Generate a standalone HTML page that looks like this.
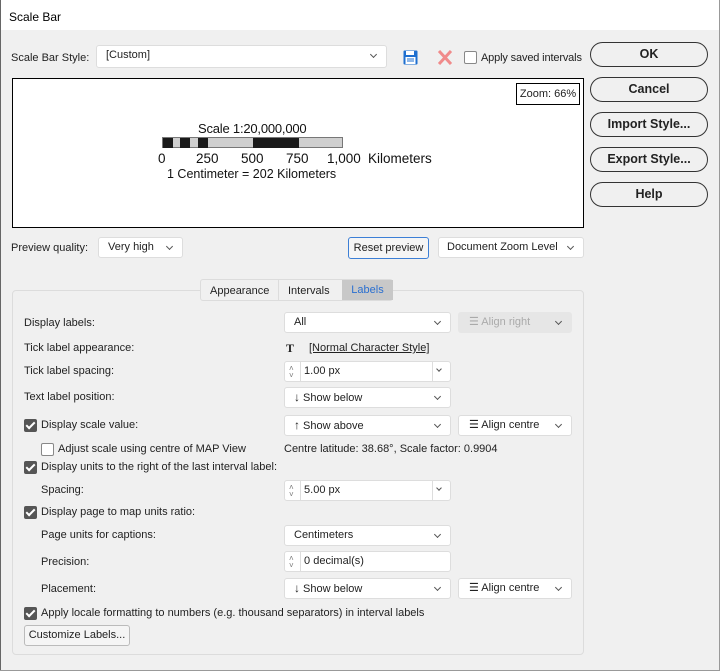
<!DOCTYPE html>
<html><head><meta charset="utf-8"><style>
*{box-sizing:border-box;margin:0;padding:0}
body{width:720px;height:671px;background:#f0f0f0;font-family:"Liberation Sans",sans-serif;font-size:11px;color:#222;position:relative;overflow:hidden}
.a{position:absolute;white-space:nowrap}
.title{left:0;top:0;width:720px;height:30px;background:#fff}
.cb{position:absolute;background:#fff;border:1px solid #ddd;border-radius:3px;height:21px;padding-left:9px;line-height:19px}
.cb:after{content:"";position:absolute;right:10px;top:6px;width:4px;height:4px;border-right:1px solid #555;border-bottom:1px solid #555;transform:rotate(45deg)}
.btn{position:absolute;left:590px;width:118px;height:25px;border:1px solid #333;border-radius:13px;background:#f0f0f0;text-align:center;line-height:23px;font-weight:bold;font-size:12.5px}
.chk{position:absolute;width:13px;height:13px;border-radius:2px;background:#555}
.chk:after{content:"";position:absolute;left:4px;top:1px;width:3px;height:7px;border-right:2px solid #fff;border-bottom:2px solid #fff;transform:rotate(45deg)}
.uchk{position:absolute;width:13px;height:13px;border:1px solid #888;border-radius:2px;background:#fff}
.spin{position:absolute;background:#fff;border:1px solid #ddd;border-radius:3px;height:21px;line-height:19px;padding-left:16px}
.spin:before{content:"";position:absolute;left:15px;top:0;bottom:0;border-left:1px solid #ddd}
.sp{position:absolute;left:4px;top:3px;font-size:8px;line-height:7px;color:#777}
.ar{font-weight:bold;font-size:12px}
</style></head><body>
<div class="a title"></div>
<div class="a" style="left:0;top:0;width:1px;height:671px;background:#666"></div>
<div class="a" style="left:719px;top:0;width:1px;height:671px;background:#999"></div>
<div class="a" style="left:0;top:670px;width:720px;height:1px;background:#999"></div>
<div class="a" style="left:9px;top:10px;font-size:12px;color:#000">Scale Bar</div>

<div class="a" style="left:11px;top:52px">Scale Bar Style:</div>
<div class="cb" style="left:96px;top:45px;width:291px;height:23px">[Custom]</div>
<svg class="a" style="left:403px;top:50px" width="15" height="15" viewBox="0 0 15 15"><rect x="0.5" y="0.5" width="14" height="14" rx="1" fill="#1e6fd0"/><rect x="3" y="1" width="8" height="4" fill="#fff"/><rect x="2.5" y="7" width="10" height="7" fill="#fff"/><path d="M4 9h7M4 11h7" stroke="#1e6fd0"/></svg>
<svg class="a" style="left:437px;top:50px" width="16" height="15" viewBox="0 0 16 15"><path d="M2 1L14 14M14 1L2 14" stroke="#f08a8a" stroke-width="3"/></svg>
<div class="uchk" style="left:464px;top:51px"></div>
<div class="a" style="left:481px;top:52px;letter-spacing:-0.15px">Apply saved intervals</div>

<div class="btn" style="top:42px">OK</div>
<div class="btn" style="top:77px">Cancel</div>
<div class="btn" style="top:112px">Import Style...</div>
<div class="btn" style="top:147px">Export Style...</div>
<div class="btn" style="top:182px">Help</div>

<div class="a" style="left:12px;top:78px;width:572px;height:150px;background:#fff;border:1px solid #000"></div>
<div class="a" style="left:516px;top:83px;width:64px;height:22px;border:1px solid #000;background:#fff;line-height:20px;text-align:center">Zoom: 66%</div>
<div class="a" style="left:198px;top:121px;font-size:13px;color:#111;letter-spacing:-0.2px">Scale 1:20,000,000</div>
<div class="a" style="left:162px;top:137px;width:181px;height:11px;background:#cfcfcf;border:1px solid #777"></div>
<div class="a" style="left:163px;top:138px;width:10px;height:10px;background:#1a1a1a"></div>
<div class="a" style="left:180px;top:138px;width:10px;height:10px;background:#1a1a1a"></div>
<div class="a" style="left:198px;top:138px;width:10px;height:10px;background:#1a1a1a"></div>
<div class="a" style="left:253px;top:138px;width:46px;height:10px;background:#1a1a1a"></div>
<div class="a" style="left:158px;top:151px;font-size:13.5px;color:#111">0</div>
<div class="a" style="left:196px;top:151px;font-size:13.5px;color:#111">250</div>
<div class="a" style="left:241px;top:151px;font-size:13.5px;color:#111">500</div>
<div class="a" style="left:286px;top:151px;font-size:13.5px;color:#111">750</div>
<div class="a" style="left:327px;top:151px;font-size:13.5px;color:#111">1,000</div>
<div class="a" style="left:368px;top:151px;font-size:13.5px;color:#111">Kilometers</div>
<div class="a" style="left:167px;top:167px;font-size:12.5px;color:#111">1 Centimeter = 202 Kilometers</div>

<div class="a" style="left:11px;top:242px">Preview quality:</div>
<div class="cb" style="left:98px;top:237px;width:85px">Very high</div>
<div class="a" style="left:348px;top:237px;width:81px;height:22px;border:1px solid #3c7fd6;border-radius:3px;background:#f5f5f5;text-align:center;line-height:20px">Reset preview</div>
<div class="cb" style="left:438px;top:237px;width:146px;padding-left:8px">Document Zoom Level</div>

<div class="a" style="left:12px;top:290px;width:572px;height:365px;border:1px solid #dcdcdc;border-radius:4px"></div>
<div class="a" style="left:200px;top:279px;width:193px;height:22px;border:1px solid #dcdcdc;border-radius:3px;background:#f0f0f0"></div>
<div class="a" style="left:210px;top:285px">Appearance</div>
<div class="a" style="left:278px;top:280px;height:20px;border-left:1px solid #dcdcdc"></div>
<div class="a" style="left:288px;top:285px">Intervals</div>
<div class="a" style="left:342px;top:280px;width:51px;height:20px;background:#c8c8c8;color:#2a6fd0;text-align:center;line-height:20px">Labels</div>

<div class="a" style="left:24px;top:317px">Display labels:</div>
<div class="cb" style="left:284px;top:312px;width:167px">All</div>
<div class="cb" style="left:458px;top:312px;width:114px;background:#e6e6e6;border-color:#e6e6e6;color:#aaa;padding-left:10px">☰ Align right</div>

<div class="a" style="left:24px;top:342px">Tick label appearance:</div>
<div class="a" style="left:286px;top:341px;font-family:'Liberation Serif',serif;font-weight:bold;font-size:12px">T</div>
<div class="a" style="left:309px;top:342px;text-decoration:underline">[Normal Character Style]</div>

<div class="a" style="left:24px;top:365px">Tick label spacing:</div>
<div class="spin" style="left:284px;top:361px;width:167px">&nbsp;1.00 px<span class="sp">˄<br>˅</span><span class="a" style="left:147px;top:0;height:19px;border-left:1px solid #ddd"></span></div>
<div class="a" style="left:437px;top:367px;width:4px;height:4px;border-right:1px solid #555;border-bottom:1px solid #555;transform:rotate(45deg)"></div>

<div class="a" style="left:24px;top:391px">Text label position:</div>
<div class="cb" style="left:284px;top:387px;width:167px"><span class="ar">↓</span> Show below</div>

<div class="chk" style="left:24px;top:419px"></div>
<div class="a" style="left:41px;top:419px">Display scale value:</div>
<div class="cb" style="left:284px;top:415px;width:167px"><span class="ar">↑</span> Show above</div>
<div class="cb" style="left:458px;top:415px;width:114px;padding-left:10px">☰ Align centre</div>

<div class="uchk" style="left:41px;top:443px"></div>
<div class="a" style="left:58px;top:443px">Adjust scale using centre of MAP View</div>
<div class="a" style="left:284px;top:443px">Centre latitude: 38.68°, Scale factor: 0.9904</div>

<div class="chk" style="left:24px;top:461px"></div>
<div class="a" style="left:41px;top:461px">Display units to the right of the last interval label:</div>

<div class="a" style="left:41px;top:484px">Spacing:</div>
<div class="spin" style="left:284px;top:480px;width:167px">&nbsp;5.00 px<span class="sp">˄<br>˅</span><span class="a" style="left:147px;top:0;height:19px;border-left:1px solid #ddd"></span></div>
<div class="a" style="left:437px;top:486px;width:4px;height:4px;border-right:1px solid #555;border-bottom:1px solid #555;transform:rotate(45deg)"></div>

<div class="chk" style="left:24px;top:506px"></div>
<div class="a" style="left:41px;top:506px">Display page to map units ratio:</div>

<div class="a" style="left:41px;top:529px">Page units for captions:</div>
<div class="cb" style="left:284px;top:525px;width:167px">Centimeters</div>

<div class="a" style="left:41px;top:556px">Precision:</div>
<div class="spin" style="left:284px;top:551px;width:167px">&nbsp;0 decimal(s)<span class="sp">˄<br>˅</span></div>

<div class="a" style="left:41px;top:583px">Placement:</div>
<div class="cb" style="left:284px;top:578px;width:167px"><span class="ar">↓</span> Show below</div>
<div class="cb" style="left:458px;top:578px;width:114px;padding-left:10px">☰ Align centre</div>

<div class="chk" style="left:24px;top:607px"></div>
<div class="a" style="left:41px;top:607px">Apply locale formatting to numbers (e.g. thousand separators) in interval labels</div>

<div class="a" style="left:24px;top:625px;width:106px;height:21px;border:1px solid #bbb;border-radius:3px;background:#f5f5f5;text-align:center;line-height:19px">Customize Labels...</div>
</body></html>
